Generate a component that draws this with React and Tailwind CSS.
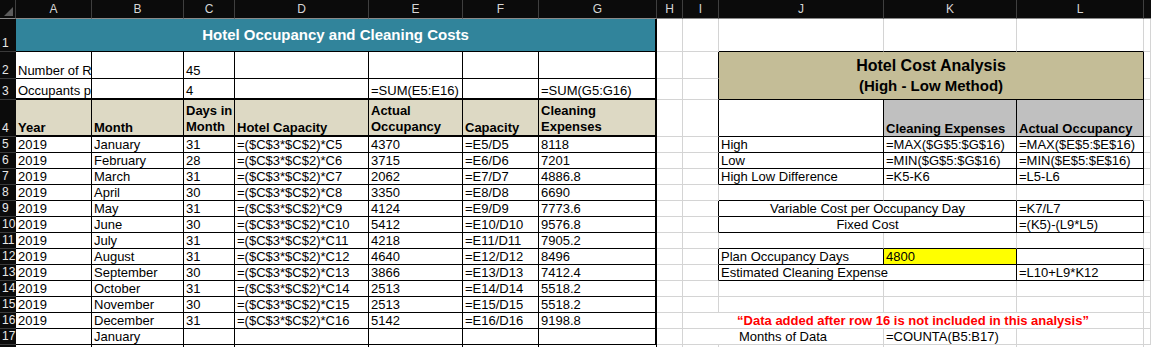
import React from 'react'

const G = 'border-[#d4d4d4]'
const B = 'border-black'
const IBOX = 'border-r-black border-b-[#d4d4d4]'
const TOPBOX = 'border-r-[#d4d4d4] border-b-black'
const HEAD = 'border-black border-b-2 bg-[#ddd9c4] font-bold'

const base = 'flex items-end overflow-hidden whitespace-nowrap border-r border-b px-[2px] leading-[15px]'

function Cell({ className = '', children }) {
    return <div className={`${base} ${className}`}>{children}</div>
}

function RowNum({ n }) {
    return (
        <div className="flex items-end bg-[#0b0b0b] text-[#e8e8e8] text-[12px] leading-[14px] pl-[2px] pb-[1px] border-b border-[#3a3a3a]">
            {n}
        </div>
    )
}

function ColHead({ label }) {
    return (
        <div className="flex items-center justify-center bg-[#0b0b0b] text-[#d6d6d6] text-[12px] border-r border-r-[#3f3f3f] border-b border-b-[#8a8a8a]">
            {label}
        </div>
    )
}

const months = [
    ['January', 31, 4370, 8118],
    ['February', 28, 3715, 7201],
    ['March', 31, 2062, 4886.8],
    ['April', 30, 3350, 6690],
    ['May', 31, 4124, 7773.6],
    ['June', 30, 5412, 9576.8],
    ['July', 31, 4218, 7905.2],
    ['August', 31, 4640, 8496],
    ['September', 30, 3866, 7412.4],
    ['October', 31, 2513, 5518.2],
    ['November', 30, 2513, 5518.2],
    ['December', 31, 5142, 9198.8],
]

const highLow = {
    5: ['High', '=MAX($G$5:$G$16)', '=MAX($E$5:$E$16)'],
    6: ['Low', '=MIN($G$5:$G$16)', '=MIN($E$5:$E$16)'],
    7: ['High Low Difference', '=K5-K6', '=L5-L6'],
}

function RightSide({ n }) {
    if (highLow[n]) {
        const [a, b, c] = highLow[n]
        return (
            <>
                <Cell className={IBOX} />
                <Cell className={B}>{a}</Cell>
                <Cell className={B}>{b}</Cell>
                <Cell className={B}>{c}</Cell>
                <Cell className={G} />
            </>
        )
    }
    if (n === 8 || n === 11) {
        return (
            <>
                <Cell className={G} />
                <Cell className={TOPBOX} />
                <Cell className={TOPBOX} />
                <Cell className={TOPBOX} />
                <Cell className={G} />
            </>
        )
    }
    if (n === 9 || n === 10) {
        return (
            <>
                <Cell className={IBOX} />
                <Cell className={`${B} col-span-2 justify-center`}>
                    {n === 9 ? 'Variable Cost per Occupancy Day' : 'Fixed Cost'}
                </Cell>
                <Cell className={B}>{n === 9 ? '=K7/L7' : '=(K5)-(L9*L5)'}</Cell>
                <Cell className={G} />
            </>
        )
    }
    if (n === 12) {
        return (
            <>
                <Cell className={IBOX} />
                <Cell className={B}>Plan Occupancy Days</Cell>
                <Cell className={`${B} bg-[#ffff00]`}>4800</Cell>
                <Cell className={B} />
                <Cell className={G} />
            </>
        )
    }
    if (n === 13) {
        return (
            <>
                <Cell className={IBOX} />
                <Cell className={`${B} col-span-2`}>Estimated Cleaning Expense</Cell>
                <Cell className={B}>=L10+L9*K12</Cell>
                <Cell className={G} />
            </>
        )
    }
    if (n === 16) {
        return (
            <>
                <Cell className={`${G} col-span-4 justify-center font-bold text-[#ff0000]`}>
                    “Data added after row 16 is not included in this analysis”
                </Cell>
                <Cell className={G} />
            </>
        )
    }
    return (
        <>
            <Cell className={G} />
            <Cell className={G} />
            <Cell className={G} />
            <Cell className={G} />
            <Cell className={G} />
        </>
    )
}

export default function App() {
    const letters = ['A', 'B', 'C', 'D', 'E', 'F', 'G', 'H', 'I', 'J', 'K', 'L']

    return (
        <div className="w-[1151px] h-[347px] overflow-hidden bg-white text-black text-[13px] font-['Liberation_Sans',Arial,sans-serif] grid grid-cols-[16px_76px_92px_51px_134px_94px_76px_118px_26px_36px_165px_133px_127px_7px] grid-rows-[19px_33px_27px_21px_37px_repeat(13,16px)_2px]">
            {/* column headers */}
            <div className="relative bg-[#0b0b0b] border-b border-b-[#8a8a8a] border-r border-r-[#3f3f3f]">
                <svg className="absolute right-[2px] bottom-[2px]" width="9" height="9" viewBox="0 0 9 9">
                    <polygon points="9,0 9,9 0,9" fill="#5c5c5c" />
                </svg>
            </div>
            {letters.map(l => <ColHead key={l} label={l} />)}
            <div className="bg-[#0b0b0b] border-b border-b-[#8a8a8a]" />

            {/* row 1 */}
            <RowNum n={1} />
            <div className="col-span-7 flex items-center justify-center bg-[#31849b] text-white font-bold text-[15px] border-b border-r-2 border-black pt-[1px]">
                Hotel Occupancy and Cleaning Costs
            </div>
            <Cell className={G} />
            <Cell className={G} />
            <Cell className={TOPBOX} />
            <Cell className={TOPBOX} />
            <Cell className={TOPBOX} />
            <Cell className={G} />

            {/* row 2 */}
            <RowNum n={2} />
            <Cell className={B}>Number of Rooms</Cell>
            <Cell className={B} />
            <Cell className={B}>45</Cell>
            <Cell className={B} />
            <Cell className={B} />
            <Cell className={B} />
            <Cell className={`${B} border-r-2`} />
            <Cell className={G} />
            <Cell className={IBOX} />
            <div className="col-span-3 row-span-2 flex flex-col items-center justify-center bg-[#c4bd97] border-r border-b border-black font-bold">
                <span className="text-[16px] leading-[20px]">Hotel Cost Analysis</span>
                <span className="text-[15px] leading-[19px]">(High - Low Method)</span>
            </div>
            <Cell className={G} />

            {/* row 3 */}
            <RowNum n={3} />
            <Cell className={`${B} border-b-2`}>Occupants per Room</Cell>
            <Cell className={`${B} border-b-2`} />
            <Cell className={`${B} border-b-2`}>4</Cell>
            <Cell className={`${B} border-b-2`} />
            <Cell className={`${B} border-b-2`}>=SUM(E5:E16)</Cell>
            <Cell className={`${B} border-b-2`} />
            <Cell className={`${B} border-b-2 border-r-2`}>=SUM(G5:G16)</Cell>
            <Cell className={G} />
            <Cell className={IBOX} />
            <Cell className={G} />

            {/* row 4 */}
            <RowNum n={4} />
            <Cell className={HEAD}>Year</Cell>
            <Cell className={HEAD}>Month</Cell>
            <Cell className={HEAD}><span className="leading-[16px]">Days in<br />Month</span></Cell>
            <Cell className={HEAD}>Hotel Capacity</Cell>
            <Cell className={HEAD}><span className="leading-[16px]">Actual<br />Occupancy</span></Cell>
            <Cell className={HEAD}>Capacity</Cell>
            <Cell className={`${HEAD} border-r-2`}><span className="leading-[16px]">Cleaning<br />Expenses</span></Cell>
            <Cell className={G} />
            <Cell className={IBOX} />
            <Cell className={B} />
            <Cell className={`${B} bg-[#c0c0c0] font-bold`}>Cleaning Expenses</Cell>
            <Cell className={`${B} bg-[#c0c0c0] font-bold`}>Actual Occupancy</Cell>
            <Cell className={G} />

            {/* rows 5-16 */}
            {months.map(([m, d, occ, exp], i) => {
                const n = i + 5
                return (
                    <React.Fragment key={m}>
                        <RowNum n={n} />
                        <Cell className={B}>2019</Cell>
                        <Cell className={B}>{m}</Cell>
                        <Cell className={B}>{d}</Cell>
                        <Cell className={B}>=($C$3*$C$2)*C{n}</Cell>
                        <Cell className={B}>{occ}</Cell>
                        <Cell className={B}>=E{n}/D{n}</Cell>
                        <Cell className={`${B} border-r-2`}>{exp}</Cell>
                        <Cell className={G} />
                        <RightSide n={n} />
                    </React.Fragment>
                )
            })}

            {/* row 17 */}
            <RowNum n={17} />
            <Cell className={B} />
            <Cell className={B}>January</Cell>
            <Cell className={B} />
            <Cell className={B} />
            <Cell className={B} />
            <Cell className={B} />
            <Cell className={`${B} border-r-2`} />
            <Cell className={G} />
            <Cell className={`${G} col-span-2 justify-center`}>Months of Data</Cell>
            <Cell className={G}>=COUNTA(B5:B17)</Cell>
            <Cell className={G} />
            <Cell className={G} />

            {/* row 18 (cut off) */}
            <div className="bg-[#0b0b0b]" />
            {letters.map(l => (
                <div key={l} className={`border-r ${['A', 'B', 'C', 'D', 'E', 'F', 'G'].includes(l) ? 'border-black' : 'border-[#d4d4d4]'}`} />
            ))}
            <div />
        </div>
    )
}
